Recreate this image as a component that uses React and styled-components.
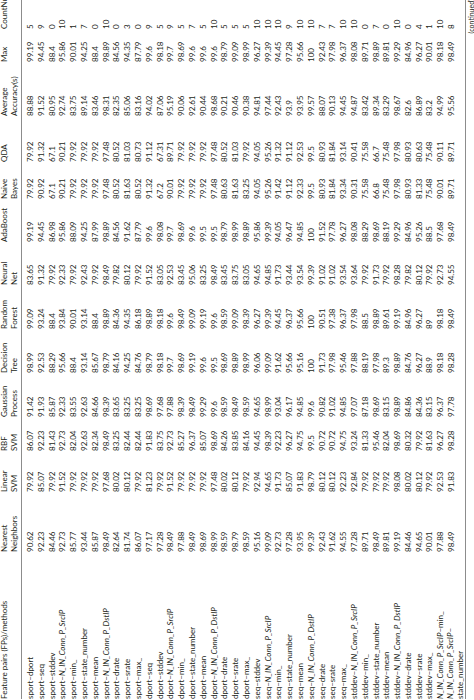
import React from "react";
import styled, { createGlobalStyle } from "styled-components";

const Global = createGlobalStyle`
  html, body {
    margin: 0;
    padding: 0;
    width: 474px;
    height: 700px;
    overflow: hidden;
    background: #fff;
  }
`;

// the page is printed sideways, so the sheet is laid out upright and turned
const Sheet = styled.div`
  width: 700px;
  height: 474px;
  transform-origin: 0 0;
  transform: translateY(700px) rotate(-90deg);
  font-family: Lato, "Liberation Sans", sans-serif;
  font-size: 8px;
  color: #231f20;
  background: #fff;
`;

const Table = styled.table`
  border-collapse: collapse;
  table-layout: fixed;
  width: 710px;
  margin-top: -1px;
`;

const HeadRow = styled.tr`
  line-height: 9.5px;
  border-bottom: 1.5px solid #8c8c8c;
`;

const HeadCell = styled.th`
  padding: 0 0 2px 0;
  text-align: left;
  vertical-align: top;
  font-weight: 400;
  white-space: nowrap;
  overflow: visible;
`;

const Row = styled.tr`
  line-height: 10.8px;
  &:first-child td {
    padding-top: 3px;
  }
  &:last-child {
    border-bottom: 1.5px solid #8c8c8c;
  }
`;

const Label = styled.td`
  padding: 0;
  vertical-align: top;
  white-space: nowrap;
  line-height: ${(p) => (p.$wrap ? "9.5px" : "10.8px")};
`;

const Value = styled.td`
  padding: 0;
  vertical-align: top;
  white-space: nowrap;
`;

const Feat = styled.span`
  font-style: ${(p) => (p.$italic ? "italic" : "normal")};
`;

const Continued = styled.div`
  width: 700px;
  text-align: right;
  font-size: 7px;
  line-height: 8px;
  margin-top: 1px;
`;

const widths = [147, 60, 41, 34, 44, 44, 44, 43, 43, 37, 46, 54, 33, 40];

const heads = [
  ["Feature pairs (FPs)/methods"],
  ["Nearest", "Neighbors"],
  ["Linear", "SVM"],
  ["RBF", "SVM"],
  ["Gaussian", "Process"],
  ["Decision", "Tree"],
  ["Random", "Forest"],
  ["Neural", "Net"],
  ["AdaBoost"],
  ["Naive", "Bayes"],
  ["QDA"],
  ["Average", "Accuracy(s)"],
  ["Max"],
  ["CountNum"],
];

const pairs = [
  ["sport", "dport"], ["sport", "seq"], ["sport", "stddev"], ["sport", "N_IN_Conn_P_SrcIP"],
  ["sport", "min_"], ["sport", "state_number"], ["sport", "mean"], ["sport", "N_IN_Conn_P_DstIP"],
  ["sport", "drate"], ["sport", "srate"], ["sport", "max_"], ["dport", "seq"],
  ["dport", "stddev"], ["dport", "N_IN_Conn_P_SrcIP"], ["dport", "min_"], ["dport", "state_number"],
  ["dport", "mean"], ["dport", "N_IN_Conn_P_DstIP"], ["dport", "drate"], ["dport", "srate"],
  ["dport", "max_"], ["seq", "stddev"], ["seq", "N_IN_Conn_P_SrcIP"], ["seq", "min_"],
  ["seq", "state_number"], ["seq", "mean"], ["seq", "N_IN_Conn_P_DstIP"], ["seq", "drate"],
  ["seq", "srate"], ["seq", "max_"], ["stddev", "N_IN_Conn_P_SrcIP"], ["stddev", "min_"],
  ["stddev", "state_number"], ["stddev", "mean"], ["stddev", "N_IN_Conn_P_DstIP"], ["stddev", "drate"],
  ["stddev", "srate"], ["stddev", "max_"], ["N_IN_Conn_P_SrcIP", "min_"], ["N_IN_Conn_P_SrcIP", "state_number"],
];

const cols = [
  "90.62 92.23 84.46 92.73 85.77 93.44 85.87 98.49 82.64 81.74 86.07 97.17 97.28 98.49 97.88 98.49 98.69 98.99 98.59 98.79 98.59 95.16 99.09 92.73 97.28 93.95 99.39 92.43 91.62 94.55 97.28 89.71 98.49 89.81 99.19 84.46 94.65 90.01 97.88 98.49",
  "79.92 85.07 79.92 91.52 79.92 79.92 79.92 97.68 80.02 80.12 79.92 81.23 79.92 91.52 79.92 79.92 79.92 97.48 80.02 80.12 79.92 92.94 94.65 91.73 85.07 91.83 98.79 80.12 80.12 92.23 92.84 79.92 79.92 79.92 98.08 80.02 80.12 79.92 92.53 91.83",
  "86.07 92.23 81.43 92.73 82.04 92.63 82.34 98.49 83.25 82.44 82.44 91.83 83.75 92.73 85.27 96.37 85.07 98.69 84.26 83.85 84.16 94.45 98.39 92.23 96.27 94.75 99.5 90.72 90.72 94.75 93.24 81.33 95.46 82.04 98.69 80.32 79.92 81.63 96.27 98.28",
  "91.42 91.93 85.87 92.33 83.55 92.63 84.66 98.39 83.65 83.25 83.25 98.69 97.68 97.88 98.39 98.49 99.29 99.6 98.59 98.49 98.59 94.65 98.99 93.04 96.17 94.85 99.6 90.82 91.02 94.85 97.07 87.18 98.69 83.15 98.89 84.86 84.36 83.15 96.37 97.78",
  "98.99 92.53 88.29 95.66 88.4 93.14 85.67 98.79 84.16 94.25 84.76 98.79 98.18 99.7 98.69 99.19 99.6 99.5 98.69 98.89 98.99 96.06 99.09 91.62 95.66 95.16 100 91.73 97.98 95.46 97.88 88.19 97.98 89.3 98.89 84.76 96.27 88.9 98.18 98.28",
  "99.09 93.24 88.4 93.84 90.01 93.14 88.4 98.89 84.36 94.35 86.18 98.89 98.18 99.6 98.49 99.09 99.19 99.6 98.59 99.09 98.39 96.27 99.39 94.45 96.37 95.66 100 90.51 97.38 96.37 97.98 88.5 98.89 89.61 99.19 84.96 96.27 89 98.18 98.49",
  "83.65 91.32 79.92 92.33 79.92 92.43 79.92 98.49 79.82 80.12 79.92 91.52 83.05 92.53 83.45 95.06 83.25 98.49 83.45 83.75 83.05 94.65 94.85 91.73 93.44 93.54 99.39 91.02 91.02 93.54 93.64 79.92 91.73 79.92 98.28 79.82 80.12 79.92 92.73 94.55",
  "99.19 94.45 86.98 95.86 88.09 94.25 87.99 98.89 84.56 91.62 87.79 99.6 98.08 99.7 98.69 99.6 99.5 99.5 98.79 98.99 98.89 95.86 99.39 94.05 96.47 94.85 100 91.52 97.78 96.27 98.08 88.29 98.69 88.19 99.29 84.96 95.26 88.5 97.68 98.49",
  "79.92 90.92 67.1 90.21 79.92 79.92 79.92 97.48 80.52 81.63 80.52 91.32 67.2 90.01 79.92 79.92 79.92 97.48 80.63 81.63 83.25 94.05 95.26 91.42 91.12 92.33 99.5 80.93 81.84 93.34 90.31 75.58 66.8 75.48 97.98 80.93 81.33 75.48 90.01 89.71",
  "79.92 91.32 67.1 90.21 79.92 79.92 79.92 97.48 80.52 81.03 80.73 91.12 67.31 89.71 79.92 79.92 79.92 97.48 80.52 81.03 79.92 94.05 95.26 91.32 91.12 92.53 99.5 80.93 81.84 93.14 90.41 75.58 66.7 75.48 97.98 80.93 80.63 75.48 90.11 89.71",
  "88.88 91.52 80.95 92.74 83.75 89.14 83.46 98.31 82.35 85.06 83.16 94.02 87.06 95.19 90.06 92.61 90.44 98.68 90.21 90.46 90.38 94.81 97.44 92.43 93.9 93.95 99.57 88.07 90.13 94.45 94.87 83.42 89.34 83.29 98.67 82.6 86.89 83.2 94.99 95.56",
  "99.19 94.45 88.4 95.86 90.01 94.25 88.4 98.89 84.56 94.35 87.79 99.6 98.18 99.7 98.69 99.6 99.6 99.6 98.79 99.09 98.99 96.27 99.39 94.45 97.28 95.66 100 92.43 97.98 96.37 98.08 89.71 98.89 89.81 99.29 84.96 96.27 90.01 98.18 98.49",
  "5 9 0 10 1 7 0 10 0 3 0 9 5 9 5 7 5 10 5 5 5 10 10 10 9 10 10 7 7 10 10 0 7 0 10 0 4 1 10 8",
].map((c) => c.split(" "));

const isConn = (f) => f.startsWith("N_IN");

function PairLabel({ pair, last }) {
  const [a, b] = pair;
  return (
    <Label $wrap={last}>
      <Feat $italic={isConn(a)}>{a}</Feat>–{last && <br />}
      <Feat $italic={isConn(b)}>{b}</Feat>
    </Label>
  );
}

export default function App() {
  return (
    <>
      <Global />
      <Sheet>
        <Table>
          <colgroup>
            {widths.map((w, i) => (
              <col key={i} style={{ width: w }} />
            ))}
          </colgroup>
          <thead>
            <HeadRow>
              {heads.map((h, i) => (
                <HeadCell key={i}>
                  {h.map((line, j) => (
                    <div key={j}>{line}</div>
                  ))}
                </HeadCell>
              ))}
            </HeadRow>
          </thead>
          <tbody>
            {pairs.map((p, r) => (
              <Row key={r}>
                <PairLabel pair={p} last={r === pairs.length - 1} />
                {cols.map((c, k) => (
                  <Value key={k}>{c[r]}</Value>
                ))}
              </Row>
            ))}
          </tbody>
        </Table>
        <Continued>(continued)</Continued>
      </Sheet>
    </>
  );
}
